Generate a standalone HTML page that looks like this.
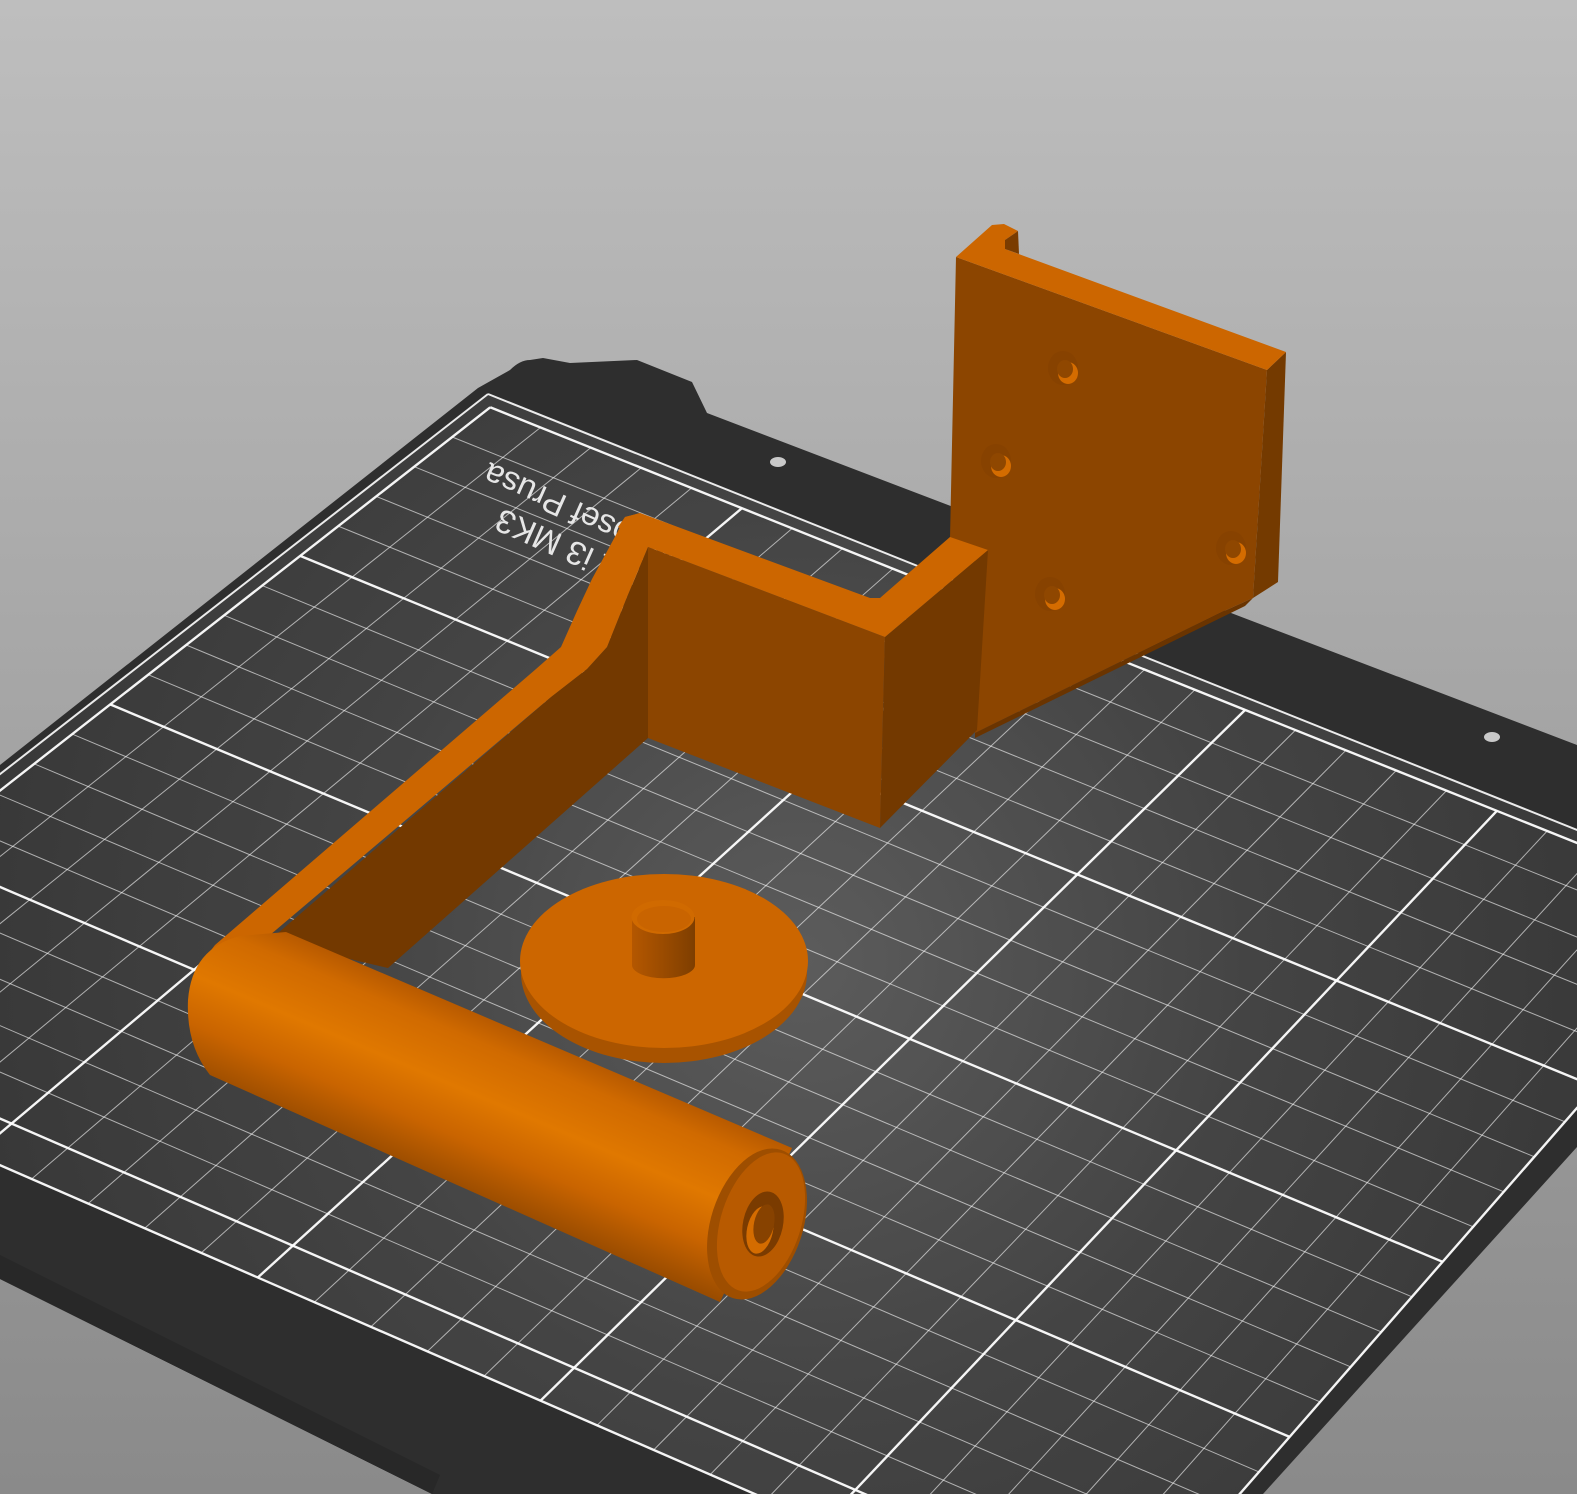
<!DOCTYPE html>
<html><head><meta charset="utf-8"><style>html,body{margin:0;padding:0;width:1577px;height:1494px;overflow:hidden;background:#a5a5a5}svg{display:block}</style></head>
<body>
<svg id="s" width="1577" height="1494" viewBox="0 0 1577 1494" xmlns="http://www.w3.org/2000/svg">
<defs>
<linearGradient id="bg" x1="0" y1="0" x2="0" y2="1494" gradientUnits="userSpaceOnUse">
<stop offset="0" stop-color="#bebebe"/><stop offset="1" stop-color="#8a8a8a"/></linearGradient>
<radialGradient id="pa" cx="800" cy="960" r="900" gradientUnits="userSpaceOnUse">
<stop offset="0" stop-color="#5c5c5c"/><stop offset="0.5" stop-color="#444"/><stop offset="1" stop-color="#363636"/></radialGradient>
<linearGradient id="cyl" x1="520" y1="1032" x2="454" y2="1187" gradientUnits="userSpaceOnUse">
<stop offset="0" stop-color="#b85a00"/><stop offset="0.15" stop-color="#d06a00"/><stop offset="0.45" stop-color="#e07800"/><stop offset="0.72" stop-color="#c96400"/><stop offset="1" stop-color="#9a4c00"/></linearGradient>
<linearGradient id="pin" x1="632" y1="0" x2="695" y2="0" gradientUnits="userSpaceOnUse">
<stop offset="0" stop-color="#b45700"/><stop offset="0.5" stop-color="#9a4b00"/><stop offset="1" stop-color="#7e3e00"/></linearGradient>
</defs>
<rect width="1577" height="1494" fill="url(#bg)"/>
<path d="M510,370 Q520,360 530,360 L543,358 L570,363 L637,360 L692,382 L707,413 L1577,745 L1577,1147 L1263,1494 L432,1494 L0,1279 L0,765 L478,388 Z" fill="#2e2e2e"/>
<path d="M0,1255 L440,1475 L432,1494 L0,1279 Z" fill="#282828"/>
<polygon id="pap" points="" fill="url(#pa)"/>
<g id="grid" stroke="#ffffff" fill="none"></g>
<ellipse cx="778" cy="462" rx="8" ry="5" fill="#c9c9c9"/>
<ellipse cx="1492" cy="737" rx="8" ry="5" fill="#c9c9c9"/>
<g font-family="Liberation Sans, sans-serif" font-size="33" fill="#e6e6e6" text-anchor="end">
<text transform="translate(502,508) rotate(204)">Original Prusa i3 MK3</text>
<text transform="translate(490,462) rotate(204)">by Josef Prusa</text>
</g>
<!-- back plate -->
<polygon points="956,257 1267,370 1253,598 1222,612 975,733 975,550 950,538" fill="#8c4500"/>
<polygon points="1267,370 1286,352 1278,582 1253,598" fill="#743a00"/>
<polygon points="1222,612 1253,598 1245,606 975,738 975,733" fill="#6a3400"/>
<polygon points="956,257 992,225 1004,224 1018,231 1005,240 1005,249 1286,352 1267,370" fill="#cc6600"/>
<polygon points="1005,240 1018,231 1019,254 1005,249" fill="#7a3c00"/>
<g>
<ellipse cx="1063" cy="368" rx="15" ry="17" fill="#874200"/><ellipse cx="1068" cy="373" rx="10" ry="11" fill="#d46c00"/><ellipse cx="1065" cy="369" rx="8" ry="9" fill="#8f4700"/>
<ellipse cx="996" cy="461" rx="15" ry="17" fill="#874200"/><ellipse cx="1001" cy="466" rx="10" ry="11" fill="#d46c00"/><ellipse cx="998" cy="462" rx="8" ry="9" fill="#8f4700"/>
<ellipse cx="1231" cy="548" rx="15" ry="17" fill="#874200"/><ellipse cx="1236" cy="553" rx="10" ry="11" fill="#d46c00"/><ellipse cx="1233" cy="549" rx="8" ry="9" fill="#8f4700"/>
<ellipse cx="1050" cy="594" rx="15" ry="17" fill="#874200"/><ellipse cx="1055" cy="599" rx="10" ry="11" fill="#d46c00"/><ellipse cx="1052" cy="595" rx="8" ry="9" fill="#8f4700"/>
</g>
<!-- L bracket -->
<polygon points="648,547 885,637 880,828 648,738" fill="#8c4500"/>
<polygon points="885,637 988,550 977,730 880,828" fill="#733900"/>
<polygon points="640,513 870,598 880,598 950,537 988,550 885,637 648,547 618,527 625,517" fill="#cc6600"/>
<!-- arm -->
<polygon points="648,547 648,738 388,968 270,940 551,697 587,669 607,647 627,597" fill="#733900"/>
<path d="M625,517 L640,513 L648,547 L627,597 L607,647 L587,669 L551,697 L270,935 L230,950 L205,958 L215,945 L536,669 L561,647 L577,611 L592,579 L617,533 Z" fill="#cc6600"/>
<!-- disc -->
<ellipse cx="664" cy="973" rx="143" ry="90" fill="#a85300"/>
<ellipse cx="664" cy="961" rx="144" ry="87" fill="#cc6600"/>
<path d="M632,917 L632,965 A31,13 0 0 0 695,965 L695,917 Z" fill="url(#pin)"/>
<ellipse cx="663" cy="917" rx="31.5" ry="17" fill="#d06a00"/>
<ellipse cx="664" cy="919" rx="27" ry="13" fill="#c96400"/>
<!-- cylinder -->
<path d="M286,932 L792,1148 L720,1302 L210,1075 Q186,1045 188,1000 Q192,948 240,936 Z" fill="url(#cyl)"/>
<ellipse cx="757" cy="1224" rx="46" ry="78" transform="rotate(18 757 1224)" fill="#9e4e00"/>
<ellipse cx="761" cy="1222" rx="40" ry="72" transform="rotate(18 761 1222)" fill="#b85a00"/>
<ellipse cx="763" cy="1224" rx="20" ry="33" transform="rotate(12 763 1224)" fill="#7a3b00"/>
<ellipse cx="760" cy="1230" rx="13" ry="24" transform="rotate(12 760 1230)" fill="#d46c00"/>
<ellipse cx="764" cy="1224" rx="10" ry="20" transform="rotate(12 764 1224)" fill="#874200"/>
</svg>
<script>
(function(){
var TL=[488,394],TR=[1757,902],BL=[-322,1025],BR=[1106,1647];
function P(u,v){var a=[TL[0]+(TR[0]-TL[0])*u,TL[1]+(TR[1]-TL[1])*u];var b=[BL[0]+(BR[0]-BL[0])*u,BL[1]+(BR[1]-BL[1])*u];return [a[0]+(b[0]-a[0])*v,a[1]+(b[1]-a[1])*v];}
function G(u,v){return P(0.01+0.99*u,0.013+0.987*v);}
var ns="http://www.w3.org/2000/svg",g=document.getElementById("grid");
function L(p,q,w,o){var e=document.createElementNS(ns,"line");e.setAttribute("x1",p[0].toFixed(1));e.setAttribute("y1",p[1].toFixed(1));e.setAttribute("x2",q[0].toFixed(1));e.setAttribute("y2",q[1].toFixed(1));e.setAttribute("stroke-width",w);e.setAttribute("stroke-opacity",o);g.appendChild(e);}
var a=P(0,0),b=P(1,0),c=P(1,1),d=P(0,1);
document.getElementById("pap").setAttribute("points",[a,b,c,d].map(function(p){return p[0].toFixed(1)+","+p[1].toFixed(1)}).join(" "));
for(var i=0;i<=25;i++){var u=i/25,maj=(i%5==0);L(G(u,0),G(u,1),maj?2.4:1,maj?0.95:0.6);}
for(var j=0;j<=21;j++){var v=Math.min(j*10/210,1),maj=(j%5==0||j==21);L(G(0,v),G(1,v),maj?2.4:1,maj?0.95:0.6);}
L(a,b,2,0.9);L(a,d,2,0.9);
})();
</script>
</body></html>
